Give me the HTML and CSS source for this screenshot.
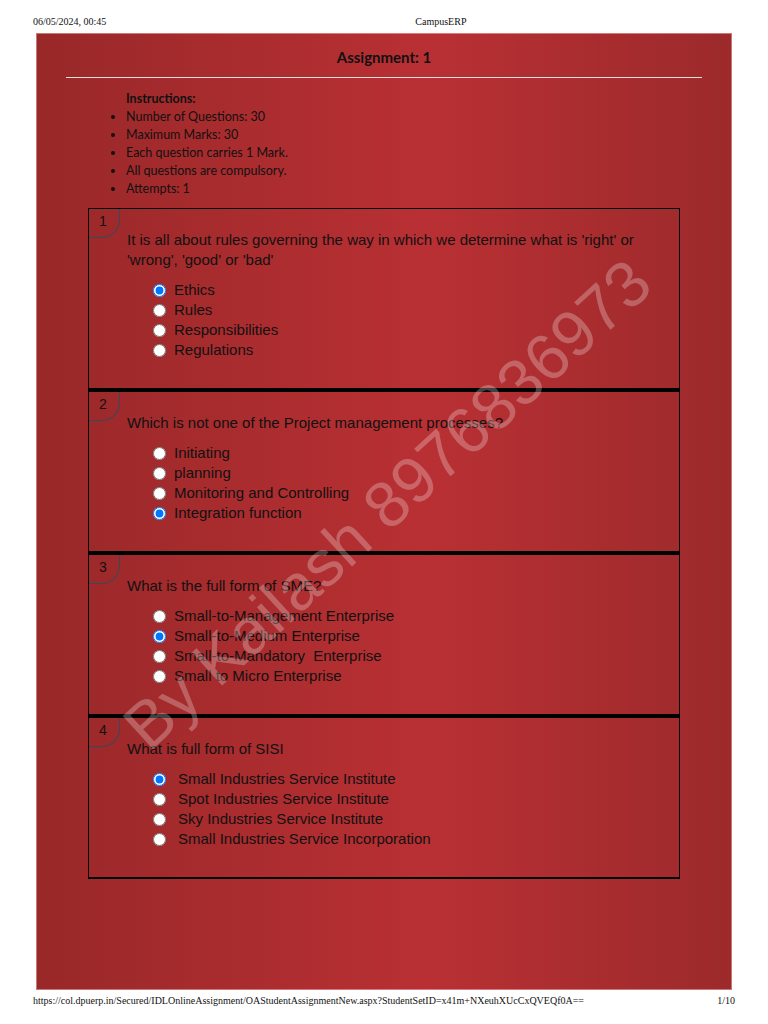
FILE: index.html
```html
<!DOCTYPE html>
<html lang="en">
<head>
    <meta charset="UTF-8">
    <meta name="viewport" content="width=device-width, initial-scale=1.0">
    <title>CampusERP</title>
    <link rel="stylesheet" href="styles.css">
</head>
<body>

    <div class="print-header">
        <span>06/05/2024, 00:45</span>
        <span class="print-title">CampusERP</span>
    </div>

    <div class="sheet">
        <h2 class="sheet-title">Assignment: 1</h2>
        <hr class="rule">

        <div class="instructions">
            <b>Instructions:</b>
            <ul>
                <li>Number of Questions: 30</li>
                <li>Maximum Marks: 30</li>
                <li>Each question carries 1 Mark.</li>
                <li>All questions are compulsory.</li>
                <li>Attempts: 1</li>
            </ul>
        </div>

        <div class="questions">
            <div class="question">
                <div class="q-no">1</div>
                <p class="q-text">It is all about rules governing the way in which we determine what is 'right' or 'wrong', 'good' or 'bad'</p>
                <div class="options">
                    <label class="option"><input type="radio" name="q1" checked> Ethics</label>
                    <label class="option"><input type="radio" name="q1"> Rules</label>
                    <label class="option"><input type="radio" name="q1"> Responsibilities</label>
                    <label class="option"><input type="radio" name="q1"> Regulations</label>
                </div>
            </div>

            <div class="question">
                <div class="q-no">2</div>
                <p class="q-text">Which is not one of the Project management processes?</p>
                <div class="options">
                    <label class="option"><input type="radio" name="q2"> Initiating</label>
                    <label class="option"><input type="radio" name="q2"> planning</label>
                    <label class="option"><input type="radio" name="q2"> Monitoring and Controlling</label>
                    <label class="option"><input type="radio" name="q2" checked> Integration function</label>
                </div>
            </div>

            <div class="question">
                <div class="q-no">3</div>
                <p class="q-text">What is the full form of SME?</p>
                <div class="options">
                    <label class="option"><input type="radio" name="q3"> Small-to-Management Enterprise</label>
                    <label class="option"><input type="radio" name="q3" checked> Small-to-Medium Enterprise</label>
                    <label class="option"><input type="radio" name="q3"> Small-to-Mandatory&nbsp; Enterprise</label>
                    <label class="option"><input type="radio" name="q3"> Small to Micro Enterprise</label>
                </div>
            </div>

            <div class="question">
                <div class="q-no">4</div>
                <p class="q-text">What is full form of SISI</p>
                <div class="options wide">
                    <label class="option"><input type="radio" name="q4" checked> Small Industries Service Institute</label>
                    <label class="option"><input type="radio" name="q4"> Spot Industries Service Institute</label>
                    <label class="option"><input type="radio" name="q4"> Sky Industries Service Institute</label>
                    <label class="option"><input type="radio" name="q4"> Small Industries Service Incorporation</label>
                </div>
            </div>
        </div>

        <!-- watermark sits over the page -->
        <div class="watermark">By Kailash 8976836973</div>
    </div>

    <div class="print-footer">
        <span>https://col.dpuerp.in/Secured/IDLOnlineAssignment/OAStudentAssignmentNew.aspx?StudentSetID=x41m+NXeuhXUcCxQVEQf0A==</span>
        <span>1/10</span>
    </div>

</body>
</html>
```

FILE: styles.css
```css
body {
    margin: 0;
    background-color: #fff;
    font-family: "Liberation Sans", Arial, sans-serif;
    color: #111;
}

.print-header,
.print-footer {
    display: flex;
    font-family: "Liberation Serif", "Times New Roman", serif;
    font-size: 10px;
    color: #111;
    padding: 0 33px;
}

.print-header {
    height: 33px;
    align-items: flex-start;
    padding-top: 16px;
    box-sizing: border-box;
}

.print-title {
    margin-left: 309px;
}

.print-footer {
    justify-content: space-between;
    padding-top: 5px;
}

.sheet {
    position: relative;
    overflow: hidden;
    margin: 0 36px;
    height: 957px;
    box-sizing: border-box;
    padding-top: 13px;
    background: linear-gradient(to right, #992829, #b52f32 50%, #b93034 56%, #9c2a2b);
    border: 1px solid rgba(255, 220, 220, 0.45);
}

.sheet-title {
    margin: 0;
    text-align: center;
    font-family: Lato, "Open Sans", sans-serif;
    font-size: 15px;
    font-weight: 700;
    line-height: 21px;
    color: #111;
}

.rule {
    margin: 9px 29px 0;
    border: none;
    border-top: 1px solid #e8dede;
}

.instructions {
    margin: 12px 0 0 89px;
    font-family: Lato, "Open Sans", sans-serif;
    font-size: 12.5px;
    line-height: 18px;
    color: #111;
}

.instructions ul {
    margin: 0;
    padding: 0;
    list-style: disc;
}

.questions {
    margin: 10px 0 0 51px;
    width: 592px;
}

.question {
    border: 1px solid #000;
    border-bottom-width: 2px;
    padding-bottom: 28px;
}

.question + .question {
    border-top-width: 2px;
}

.q-no {
    width: 31px;
    height: 29px;
    box-sizing: border-box;
    padding: 4px 0 0 10px;
    font-size: 14px;
    line-height: 16px;
    border-right: 1px solid #38495c;
    border-bottom: 1px solid #38495c;
    border-bottom-right-radius: 18px;
}

.q-text {
    margin: -8px 0 0;
    padding: 0 38px;
    font-size: 15px;
    line-height: 20px;
}

.options {
    margin-top: 10px;
    padding-left: 64px;
}

.option {
    display: flex;
    align-items: center;
    gap: 8px;
    font-size: 15px;
    line-height: 20px;
}

.options.wide .option {
    gap: 12px;
}

.option input {
    margin: 0;
    width: 13px;
    height: 13px;
}

.watermark {
    position: absolute;
    left: 350px;
    top: 470px;
    transform: translate(-50%, -50%) rotate(-42.5deg);
    white-space: nowrap;
    font-family: "Liberation Sans", Arial, sans-serif;
    font-size: 65px;
    color: rgba(255, 255, 255, 0.26);
    pointer-events: none;
}
```
